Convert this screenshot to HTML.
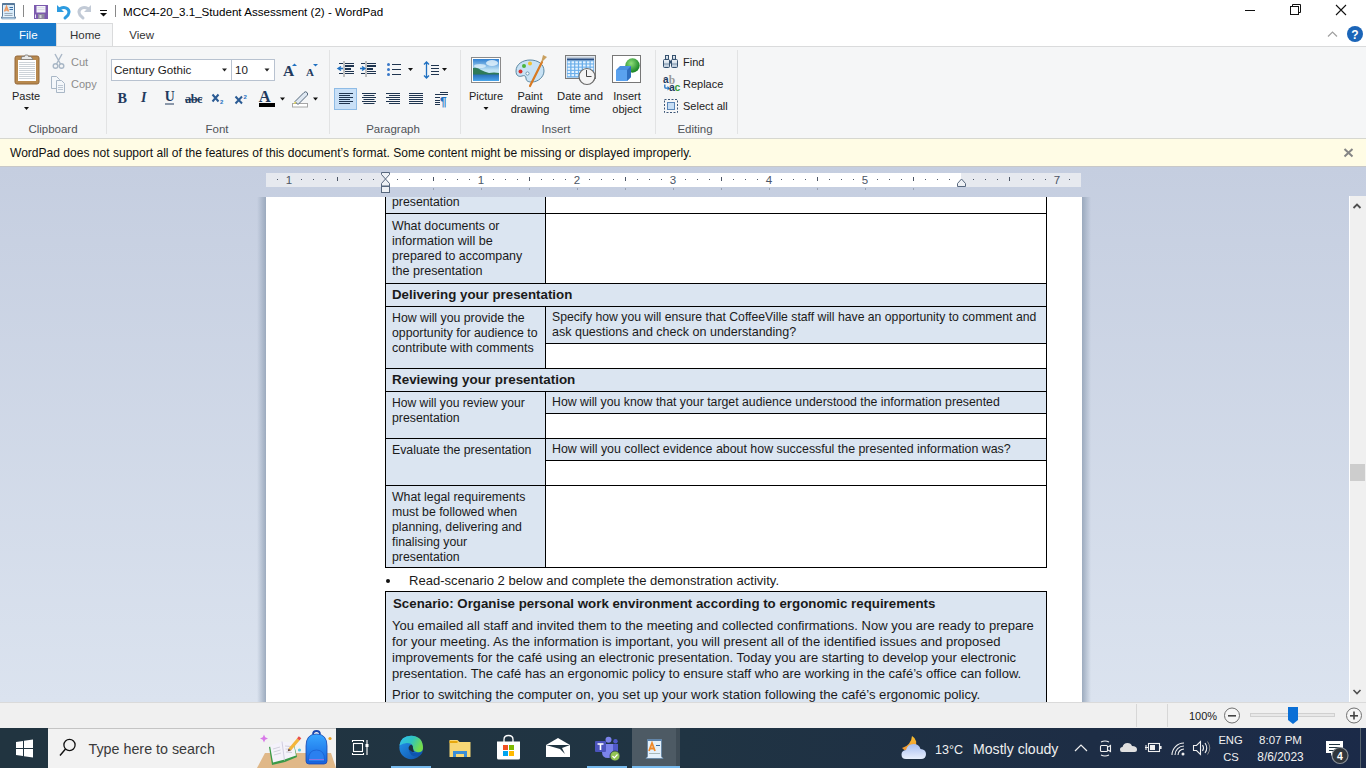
<!DOCTYPE html>
<html><head><meta charset="utf-8">
<style>
*{margin:0;padding:0;box-sizing:border-box}
html,body{width:1366px;height:768px;overflow:hidden;background:#fff;font-family:"Liberation Sans",sans-serif;color:#000}
.a{position:absolute}
.dt{line-height:20px;white-space:nowrap}
#title{left:0;top:0;width:1366px;height:23px;background:#fff}
#tabs{left:0;top:23px;width:1366px;height:23px;background:#fff}
#ribbon{left:0;top:46px;width:1366px;height:93px;background:#f5f6f7;border-top:1px solid #dadbdc;border-bottom:1px solid #d6d7d0}
#notif{left:0;top:139px;width:1366px;height:28px;background:#fffce5;border-bottom:1px solid #c8c8c8}
#work{left:0;top:167px;width:1366px;height:535px;background:linear-gradient(#c5cee0,#dbe3ef)}
#status{left:0;top:702px;width:1366px;height:26px;background:#f0f0f0;border-top:1px solid #dadada}
#taskbar{left:0;top:728px;width:1366px;height:40px;background:linear-gradient(90deg,#213440 0%,#203443 50%,#1d2d45 80%,#1b2a48 100%)}
</style></head><body>
<div id="title" class="a"></div>
<div id="tabs" class="a">
  <div class="a" style="left:56px;top:0;width:57px;height:24px;background:#f5f6f7;border:1px solid #dadbdc;border-bottom:none"></div>
</div>
<div id="ribbon" class="a"></div>
<div id="notif" class="a"></div>
<div id="work" class="a">
  <div class="a" style="left:257px;top:30px;width:9px;height:505px;background:linear-gradient(90deg,rgba(150,165,185,0),rgba(150,165,185,.9))"></div>
  <div class="a" style="left:1082px;top:30px;width:9px;height:505px;background:linear-gradient(90deg,rgba(150,165,185,.9),rgba(150,165,185,0))"></div>
  <div class="a" style="left:266px;top:30px;width:816px;height:505px;background:#fff"></div>
</div>
<div class="a" style="left:0;top:197px;width:1349px;height:505px;overflow:hidden">
<div class="a" style="left:0;top:-197px;width:1349px;height:768px">
<div class="a" style="left:385px;top:197px;width:160px;height:370px;background:#dbe5f1"></div>
<div class="a" style="left:385px;top:283px;width:661px;height:23px;background:#dbe5f1"></div>
<div class="a" style="left:385px;top:368px;width:661px;height:23px;background:#dbe5f1"></div>
<div class="a" style="left:545px;top:306px;width:501px;height:37px;background:#dbe5f1"></div>
<div class="a" style="left:545px;top:391px;width:501px;height:22px;background:#dbe5f1"></div>
<div class="a" style="left:545px;top:438px;width:501px;height:22px;background:#dbe5f1"></div>
<div class="a" style="left:385px;top:213px;width:662px;height:1px;background:#000"></div>
<div class="a" style="left:385px;top:283px;width:662px;height:1px;background:#000"></div>
<div class="a" style="left:385px;top:306px;width:662px;height:1px;background:#000"></div>
<div class="a" style="left:385px;top:368px;width:662px;height:1px;background:#000"></div>
<div class="a" style="left:385px;top:391px;width:662px;height:1px;background:#000"></div>
<div class="a" style="left:385px;top:438px;width:662px;height:1px;background:#000"></div>
<div class="a" style="left:385px;top:485px;width:662px;height:1px;background:#000"></div>
<div class="a" style="left:385px;top:567px;width:662px;height:1px;background:#000"></div>
<div class="a" style="left:545px;top:343px;width:502px;height:1px;background:#000"></div>
<div class="a" style="left:545px;top:413px;width:502px;height:1px;background:#000"></div>
<div class="a" style="left:545px;top:460px;width:502px;height:1px;background:#000"></div>
<div class="a" style="left:385px;top:197px;width:1px;height:371px;background:#000"></div>
<div class="a" style="left:1046px;top:197px;width:1px;height:371px;background:#000"></div>
<div class="a" style="left:545px;top:197px;width:1px;height:86px;background:#000"></div>
<div class="a" style="left:545px;top:306px;width:1px;height:62px;background:#000"></div>
<div class="a" style="left:545px;top:391px;width:1px;height:176px;background:#000"></div>
<div class="a" style="left:385px;top:591px;width:662px;height:111px;background:#dbe5f1"></div>
<div class="a" style="left:385px;top:591px;width:662px;height:1px;background:#000"></div>
<div class="a" style="left:385px;top:591px;width:1px;height:111px;background:#000"></div>
<div class="a" style="left:1046px;top:591px;width:1px;height:111px;background:#000"></div>
<div class="a dt" style="left:392px;top:191.74px;font-size:12.3px;color:#1a1a1a">presentation</div>
<div class="a dt" style="left:392px;top:215.70px;font-size:12.40443396226415px;color:#1a1a1a">What documents or</div>
<div class="a dt" style="left:392px;top:230.64px;font-size:12.581874999999998px;color:#1a1a1a">information will be</div>
<div class="a dt" style="left:392px;top:245.70px;font-size:12.406535433070868px;color:#1a1a1a">prepared to accompany</div>
<div class="a dt" style="left:392px;top:260.63px;font-size:12.614651162790697px;color:#1a1a1a">the presentation</div>
<div class="a dt" style="left:392px;top:285.39px;font-size:13.3px;font-weight:bold;color:#1a1a1a">Delivering your presentation</div>
<div class="a dt" style="left:392px;top:307.74px;font-size:12.3px;color:#1a1a1a">How will you provide the</div>
<div class="a dt" style="left:392px;top:322.74px;font-size:12.3px;color:#1a1a1a">opportunity for audience to</div>
<div class="a dt" style="left:392px;top:337.67px;font-size:12.50649635036496px;color:#1a1a1a">contribute with comments</div>
<div class="a dt" style="left:552px;top:306.76px;font-size:12.22645360824742px;color:#1a1a1a">Specify how you will ensure that CoffeeVille staff will have an opportunity to comment and</div>
<div class="a dt" style="left:552px;top:321.66px;font-size:12.537731092436976px;color:#1a1a1a">ask questions and check on understanding?</div>
<div class="a dt" style="left:392px;top:370.35px;font-size:13.418882681564249px;font-weight:bold;color:#1a1a1a">Reviewing your presentation</div>
<div class="a dt" style="left:392px;top:392.79px;font-size:12.142781954887214px;color:#1a1a1a">How will you review your</div>
<div class="a dt" style="left:392px;top:407.74px;font-size:12.3px;color:#1a1a1a">presentation</div>
<div class="a dt" style="left:552px;top:391.74px;font-size:12.3px;color:#1a1a1a">How will you know that your target audience understood the information presented</div>
<div class="a dt" style="left:392px;top:439.74px;font-size:12.3px;color:#1a1a1a">Evaluate the presentation</div>
<div class="a dt" style="left:552px;top:438.70px;font-size:12.400463576158941px;color:#1a1a1a">How will you collect evidence about how successful the presented information was?</div>
<div class="a dt" style="left:392px;top:486.74px;font-size:12.3px;color:#1a1a1a">What legal requirements</div>
<div class="a dt" style="left:392px;top:501.74px;font-size:12.3px;color:#1a1a1a">must be followed when</div>
<div class="a dt" style="left:392px;top:516.74px;font-size:12.3px;color:#1a1a1a">planning, delivering and</div>
<div class="a dt" style="left:392px;top:531.74px;font-size:12.3px;color:#1a1a1a">finalising your</div>
<div class="a dt" style="left:392px;top:546.74px;font-size:12.3px;color:#1a1a1a">presentation</div>
<div class="a" style="left:386px;top:579px;width:4px;height:4px;border-radius:50%;background:#111"></div>
<div class="a dt" style="left:409px;top:571.07px;font-size:13.07123287671233px;color:#1a1a1a">Read-scenario 2 below and complete the demonstration activity.</div>
<div class="a dt" style="left:393px;top:594.39px;font-size:13.3px;font-weight:bold;color:#1a1a1a">Scenario: Organise personal work environment according to ergonomic requirements</div>
<div class="a dt" style="left:392px;top:616.49px;font-size:13.028482003129891px;color:#1a1a1a">You emailed all staff and invited them to the meeting and collected confirmations. Now you are ready to prepare</div>
<div class="a dt" style="left:392px;top:632.46px;font-size:13.097014925373134px;color:#1a1a1a">for your meeting. As the information is important, you will present all of the identified issues and proposed</div>
<div class="a dt" style="left:392px;top:647.70px;font-size:13px;color:#1a1a1a">improvements for the café using an electronic presentation. Today you are starting to develop your electronic</div>
<div class="a dt" style="left:392px;top:664.48px;font-size:13.03952px;color:#1a1a1a">presentation. The café has an ergonomic policy to ensure staff who are working in the café’s office can follow.</div>
<div class="a dt" style="left:392px;top:684.85px;font-size:13.13px;color:#1a1a1a">Prior to switching the computer on, you set up your work station following the café’s ergonomic policy.</div>
</div></div>
<div id="status" class="a"></div>
<div id="taskbar" class="a"></div>
<div class="a" style="left:0px;top:23px;width:56px;height:23px;background:#1979ca;"></div>
<div class="a" style="left:266px;top:173px;width:815px;height:14px;background:#e6e9ef;"></div>
<div class="a" style="left:385px;top:173px;width:576px;height:14px;background:#ffffff;"></div>
<div class="a" style="left:1349px;top:196px;width:17px;height:506px;background:#f0f0f0;border-left:1px solid #fff"></div>
<div class="a" style="left:1350px;top:464px;width:15px;height:17px;background:#cdcdcd;"></div>
<div class="a" style="left:48px;top:728px;width:288px;height:40px;background:#f2f2f2;border-top:1px solid #c4c4c4"></div>
<div class="a" style="left:391px;top:766px;width:40px;height:2px;background:#76b9ed;"></div>
<div class="a" style="left:587px;top:766px;width:40px;height:2px;background:#76b9ed;"></div>
<div class="a" style="left:632px;top:728px;width:44px;height:40px;background:#4d5a64;"></div>
<div class="a" style="left:676px;top:728px;width:4px;height:40px;background:#3f4c56;"></div>
<div class="a" style="left:632px;top:766px;width:48px;height:2px;background:#76b9ed;"></div><svg class="a" style="left:0;top:0" width="1366" height="768"><g transform="translate(1,3)"><path d="M1.5 0.5 h12 v12.5 l1.2 2 h-14.4 l1.2 -2 z" fill="#eaf4fc" stroke="#56789a" stroke-width="1"/><rect x="1.5" y="0.5" width="12" height="1.6" fill="#56789a"/><rect x="2.5" y="2.5" width="10" height="10" fill="#d8ebfa"/><path d="M3.5 8.5 L5.5 3.5 L7.5 8.5 M4.3 7 h2.4" stroke="#ee9a62" stroke-width="1.5" fill="none"/><rect x="8.5" y="4" width="3.5" height="1" fill="#3a6ea5"/><rect x="8.5" y="6" width="3.5" height="1" fill="#3a6ea5"/><rect x="3.5" y="10" width="8" height="0.8" fill="#8a9aaa"/><rect x="3.5" y="12" width="8" height="0.8" fill="#8a9aaa"/><rect x="1" y="14.5" width="13" height="1.5" fill="#b9d4ec" stroke="#6a8aa8" stroke-width="0.5"/></g>
<rect x="23" y="5" width="1" height="12" fill="#888"/>
<g transform="translate(34,5)"><rect x="0" y="0" width="14" height="14" fill="#7c5aae"/><rect x="2.5" y="1" width="9" height="6.5" fill="#f4f4fa"/><rect x="3.5" y="2.5" width="7" height="0.6" fill="#c8c8d8"/><rect x="3.5" y="4.5" width="7" height="0.6" fill="#c8c8d8"/><rect x="4" y="9" width="6.5" height="5" fill="#8e8a9e"/><rect x="5.5" y="10" width="2" height="3" fill="#d0d0d8"/><rect x="1" y="9.5" width="1" height="3.5" fill="#e8e0f4"/></g>
<path d="M57 5 v7 h7 z" fill="#2d9be0"/><path d="M60 8.5 C66 5.5 71 10 68 15 L65 18" stroke="#2d9be0" stroke-width="3" fill="none" stroke-linecap="round"/>
<path d="M91 5 v7 h-7 z" fill="#c2cad6"/><path d="M88 8.5 C82 5.5 77 10 80 15 L83 18" stroke="#c2cad6" stroke-width="3" fill="none" stroke-linecap="round"/>
<rect x="100" y="10" width="7" height="1" fill="#111"/><path d="M100 13 h7 l-3.5 3.5 z" fill="#111"/>
<rect x="115" y="5" width="1" height="12" fill="#888"/>
<rect x="1245" y="10" width="10" height="1" fill="#111"/>
<rect x="1290.5" y="6.5" width="8" height="8" fill="none" stroke="#111"/><path d="M1292.5 6.5 v-2 h8 v8 h-2" fill="none" stroke="#111"/>
<path d="M1336 5 L1346 15 M1346 5 L1336 15" stroke="#111" stroke-width="1.1"/>
<path d="M1328 36.5 l4.5 -4.5 l4.5 4.5" stroke="#a0a0a0" stroke-width="1.2" fill="none"/>
<circle cx="1355" cy="34" r="8" fill="#1b65b8"/>
<rect x="106" y="50" width="1" height="84" fill="#e2e3e4"/>
<rect x="329" y="50" width="1" height="84" fill="#e2e3e4"/>
<rect x="460" y="50" width="1" height="84" fill="#e2e3e4"/>
<rect x="655" y="50" width="1" height="84" fill="#e2e3e4"/>
<rect x="737" y="50" width="1" height="84" fill="#e2e3e4"/>
<g><rect x="15" y="56" width="24" height="28" rx="2" fill="#b8894e" stroke="#94683a" stroke-width="1"/><rect x="18" y="60" width="18" height="21" fill="#fff"/><rect x="19" y="62" width="16" height="0.7" fill="#b8c0c8"/><rect x="19" y="64" width="16" height="0.7" fill="#b8c0c8"/><rect x="19" y="66" width="16" height="0.7" fill="#b8c0c8"/><rect x="19" y="68" width="16" height="0.7" fill="#b8c0c8"/><rect x="19" y="70" width="16" height="0.7" fill="#b8c0c8"/><rect x="19" y="72" width="16" height="0.7" fill="#b8c0c8"/><rect x="19" y="74" width="16" height="0.7" fill="#b8c0c8"/><rect x="19" y="76" width="16" height="0.7" fill="#b8c0c8"/><rect x="19" y="78" width="16" height="0.7" fill="#b8c0c8"/><path d="M21 59.5 h12 l-2 -3 h-2.5 l-0.7 -1.5 h-2.6 l-0.7 1.5 h-2.5 z" fill="#e8e8e8" stroke="#777" stroke-width="0.8"/></g>
<path d="M24.0 107 h5 l-2.5 3.0 z" fill="#111"/>
<g stroke="#a9b7c6" fill="none" stroke-width="1.4"><path d="M55 54 L60.5 64 M62 54 L56.5 64"/><circle cx="55.5" cy="66" r="2.3"/><circle cx="61.5" cy="66" r="2.3"/></g>
<g stroke="#a9b7c6" fill="#f4f7fa" stroke-width="1"><path d="M51.5 76.5 h5 l3 3 v9 h-8 z"/><path d="M56.5 80.5 h5 l3 3 v9 h-8 z"/></g><g fill="#b0bccb"><rect x="58" y="85" width="5" height="0.8"/><rect x="58" y="87" width="5" height="0.8"/><rect x="58" y="89" width="5" height="0.8"/></g>
<rect x="111.5" y="59.5" width="120" height="21" fill="#fff" stroke="#b8c2d0"/>
<rect x="231.5" y="59.5" width="43" height="21" fill="#fff" stroke="#b8c2d0"/>
<path d="M222.0 68.5 h5 l-2.5 3.0 z" fill="#222"/>
<path d="M264.5 68.5 h5 l-2.5 3.0 z" fill="#222"/>
<path d="M292 66 l2.5 -2.5 l2.5 2.5 z" fill="#1f70c1"/>
<path d="M313 64 h5 l-2.5 2.5 z" fill="#1f70c1"/>
<rect x="165" y="103.5" width="9" height="1" fill="#223a5e"/>
<rect x="185" y="99.2" width="17" height="1.1" fill="#223a5e"/>
<path d="M212.5 94.5 l6 7 M218.5 94.5 l-6 7" stroke="#2b5b94" stroke-width="2"/>
<path d="M235.5 96.5 l6.5 7 M242 96.5 l-6.5 7" stroke="#2b5b94" stroke-width="2"/>
<rect x="259" y="103" width="16" height="4" fill="#000"/>
<path d="M280.0 97.5 h5 l-2.5 3.0 z" fill="#111"/>
<g><rect x="292.5" y="103.5" width="15" height="3.5" fill="#fff" stroke="#a6a6a6"/><path d="M295 101.5 l9 -9 a2 2 0 0 1 3 3 l-9 9 z" fill="#dfe8f2" stroke="#56687c" stroke-width="1"/><path d="M295 101.5 l-1.5 2.5 l3 -1 z" fill="#e8d84a"/></g>
<path d="M313.0 97.5 h5 l-2.5 3.0 z" fill="#111"/>
<g fill="#1f3550"><rect x="339" y="63" width="4" height="1"/><rect x="345" y="63" width="9" height="1"/><rect x="345" y="65" width="9" height="2"/><rect x="345" y="68" width="6" height="2"/><rect x="345" y="71" width="9" height="1"/><rect x="339" y="73" width="4" height="1"/><rect x="345" y="73" width="9" height="1"/><path d="M344 61.5 v16" stroke="#222" stroke-width="1" stroke-dasharray="1,1"/></g>
<path d="M343 68.5 h-4 M341 66.5 l-3 2 l3 2" stroke="#1f70c1" stroke-width="1.4" fill="none"/>
<g fill="#1f3550"><rect x="361" y="63" width="4" height="1"/><rect x="367" y="63" width="9" height="1"/><rect x="367" y="65" width="9" height="2"/><rect x="367" y="68" width="6" height="2"/><rect x="367" y="71" width="9" height="1"/><rect x="361" y="73" width="4" height="1"/><rect x="367" y="73" width="9" height="1"/><path d="M366 61.5 v16" stroke="#222" stroke-width="1" stroke-dasharray="1,1"/></g>
<path d="M360 68.5 h4 M362 66.5 l3 2 l-3 2" stroke="#1f70c1" stroke-width="1.4" fill="none"/>
<circle cx="388.5" cy="64.5" r="1.5" fill="#3a78c8"/>
<rect x="392" y="64" width="9" height="1" fill="#1f3550"/>
<circle cx="388.5" cy="69.5" r="1.5" fill="#3a78c8"/>
<rect x="392" y="69" width="9" height="1" fill="#1f3550"/>
<circle cx="388.5" cy="74.5" r="1.5" fill="#3a78c8"/>
<rect x="392" y="74" width="9" height="1" fill="#1f3550"/>
<path d="M408.0 68 h5 l-2.5 3.0 z" fill="#111"/>
<path d="M426.5 62 v16 M424 64.5 l2.5 -2.5 l2.5 2.5 M424 75.5 l2.5 2.5 l2.5 -2.5" stroke="#1f70c1" stroke-width="1.3" fill="none"/>
<rect x="431" y="65" width="8" height="1" fill="#1f3550"/>
<rect x="431" y="68" width="8" height="1" fill="#1f3550"/>
<rect x="431" y="71" width="8" height="1" fill="#1f3550"/>
<rect x="431" y="74" width="8" height="1" fill="#1f3550"/>
<path d="M442.0 68 h5 l-2.5 3.0 z" fill="#111"/>
<rect x="334.5" y="88.5" width="22" height="21" fill="#c9e0f7" stroke="#8fbce6"/>
<rect x="339" y="93" width="14" height="1" fill="#1f3550"/>
<rect x="339" y="95" width="11" height="1" fill="#1f3550"/>
<rect x="339" y="97" width="14" height="1" fill="#1f3550"/>
<rect x="339" y="99" width="11" height="1" fill="#1f3550"/>
<rect x="339" y="101" width="14" height="1" fill="#1f3550"/>
<rect x="339" y="103" width="11" height="1" fill="#1f3550"/>
<rect x="362.0" y="93" width="14.0" height="1" fill="#1f3550"/>
<rect x="363.5" y="95" width="11.0" height="1" fill="#1f3550"/>
<rect x="362.0" y="97" width="14.0" height="1" fill="#1f3550"/>
<rect x="363.5" y="99" width="11.0" height="1" fill="#1f3550"/>
<rect x="362.0" y="101" width="14.0" height="1" fill="#1f3550"/>
<rect x="363.5" y="103" width="11.0" height="1" fill="#1f3550"/>
<rect x="386" y="93" width="14" height="1" fill="#1f3550"/>
<rect x="389" y="95" width="11" height="1" fill="#1f3550"/>
<rect x="386" y="97" width="14" height="1" fill="#1f3550"/>
<rect x="389" y="99" width="11" height="1" fill="#1f3550"/>
<rect x="386" y="101" width="14" height="1" fill="#1f3550"/>
<rect x="389" y="103" width="11" height="1" fill="#1f3550"/>
<rect x="409" y="93" width="14" height="1" fill="#1f3550"/>
<rect x="409" y="95" width="14" height="1" fill="#1f3550"/>
<rect x="409" y="97" width="14" height="1" fill="#1f3550"/>
<rect x="409" y="99" width="14" height="1" fill="#1f3550"/>
<rect x="409" y="101" width="14" height="1" fill="#1f3550"/>
<rect x="409" y="103" width="14" height="1" fill="#1f3550"/>
<rect x="440" y="92" width="8" height="1" fill="#1f3550"/>
<rect x="435" y="94" width="13" height="1" fill="#1f3550"/>
<rect x="435" y="97" width="5" height="1" fill="#1f3550"/>
<rect x="435" y="100" width="5" height="1" fill="#1f3550"/>
<rect x="435" y="102" width="5" height="1" fill="#1f3550"/>
<rect x="435" y="104" width="5" height="1" fill="#1f3550"/>
<defs><linearGradient id="sky" x1="0" y1="0" x2="0" y2="1"><stop offset="0" stop-color="#3f8fd8"/><stop offset="0.45" stop-color="#d6eef8"/><stop offset="0.6" stop-color="#4d9a7a"/><stop offset="0.75" stop-color="#2f6e68"/><stop offset="0.8" stop-color="#3b8cd0"/><stop offset="1" stop-color="#5aaee8"/></linearGradient><radialGradient id="ball" cx="0.4" cy="0.35" r="0.6"><stop offset="0" stop-color="#8fde7a"/><stop offset="1" stop-color="#1f8a2a"/></radialGradient><linearGradient id="sky2" x1="0" y1="0" x2="0" y2="1"><stop offset="0" stop-color="#2f80d2"/><stop offset="0.5" stop-color="#bfe2f4"/><stop offset="1" stop-color="#d8eef8"/></linearGradient><linearGradient id="water" x1="0" y1="0" x2="0" y2="1"><stop offset="0" stop-color="#2a6fb8"/><stop offset="1" stop-color="#4aa6ea"/></linearGradient></defs>
<rect x="471.5" y="57.5" width="29" height="25" fill="#fff" stroke="#8a8a8a"/>
<rect x="473" y="59" width="26" height="22" fill="url(#sky2)"/>
<ellipse cx="492" cy="63" rx="6" ry="3" fill="#e8f6fc" opacity="0.8"/><ellipse cx="480" cy="66" rx="6" ry="2" fill="#e8f6fc" opacity="0.7"/>
<path d="M473 68 q4 -1 8 2 q4 2 8 3 q5 -1 10 0 v3 h-26 z" fill="#2f7a58"/>
<rect x="473" y="74.5" width="26" height="6.5" fill="url(#water)"/>
<path d="M483.5 107 h5 l-2.5 3.0 z" fill="#111"/>
<path d="M516 71 c0 -7 7 -11 14 -11 c8 0 14 4 14 11 c0 6 -6 11 -12 11 c-4 0 -6 -1 -6 -4 c0 -2 -2 -3 -4 -2 c-3 1 -6 0 -6 -5 z" fill="#c8e2f5" stroke="#4b7a96" stroke-width="0.9"/>
<circle cx="520.5" cy="71.5" r="2" fill="#d9302a"/><circle cx="524" cy="66" r="2" fill="#4cb53a"/><circle cx="530" cy="63.5" r="2" fill="#f2c12e"/><circle cx="527.5" cy="73.5" r="1.6" fill="#fff" stroke="#4b7a96" stroke-width="0.7"/>
<path d="M530 86 L542 62" stroke="#d87a22" stroke-width="2.2" stroke-linecap="round"/><path d="M541 63 l2 -8 l4 2 z" fill="#c9a060"/>
<rect x="565.5" y="55.5" width="30" height="23" fill="#dfe6ee" stroke="#7a7a7a"/>
<rect x="567" y="57" width="27" height="1.5" fill="#c0cad6"/><rect x="567" y="58.5" width="27" height="2" fill="#2b4f84"/>
<rect x="567" y="60.5" width="27" height="17" fill="#6aaeea"/>
<rect x="567.6" y="61.3" width="2.6" height="2.1" fill="#e6f4ff"/>
<rect x="571.5" y="61.3" width="2.6" height="2.1" fill="#e6f4ff"/>
<rect x="575.3" y="61.3" width="2.6" height="2.1" fill="#e6f4ff"/>
<rect x="579.1" y="61.3" width="2.6" height="2.1" fill="#e6f4ff"/>
<rect x="583.0" y="61.3" width="2.6" height="2.1" fill="#e6f4ff"/>
<rect x="586.9" y="61.3" width="2.6" height="2.1" fill="#e6f4ff"/>
<rect x="590.7" y="61.3" width="2.6" height="2.1" fill="#e6f4ff"/>
<rect x="567.6" y="64.5" width="2.6" height="2.1" fill="#e6f4ff"/>
<rect x="571.5" y="64.5" width="2.6" height="2.1" fill="#e6f4ff"/>
<rect x="575.3" y="64.5" width="2.6" height="2.1" fill="#e6f4ff"/>
<rect x="579.1" y="64.5" width="2.6" height="2.1" fill="#e6f4ff"/>
<rect x="583.0" y="64.5" width="2.6" height="2.1" fill="#e6f4ff"/>
<rect x="586.9" y="64.5" width="2.6" height="2.1" fill="#e6f4ff"/>
<rect x="590.7" y="64.5" width="2.6" height="2.1" fill="#e6f4ff"/>
<rect x="567.6" y="67.7" width="2.6" height="2.1" fill="#e6f4ff"/>
<rect x="571.5" y="67.7" width="2.6" height="2.1" fill="#e6f4ff"/>
<rect x="575.3" y="67.7" width="2.6" height="2.1" fill="#e6f4ff"/>
<rect x="579.1" y="67.7" width="2.6" height="2.1" fill="#e6f4ff"/>
<rect x="583.0" y="67.7" width="2.6" height="2.1" fill="#e6f4ff"/>
<rect x="586.9" y="67.7" width="2.6" height="2.1" fill="#e6f4ff"/>
<rect x="590.7" y="67.7" width="2.6" height="2.1" fill="#e6f4ff"/>
<rect x="567.6" y="70.9" width="2.6" height="2.1" fill="#e6f4ff"/>
<rect x="571.5" y="70.9" width="2.6" height="2.1" fill="#e6f4ff"/>
<rect x="575.3" y="70.9" width="2.6" height="2.1" fill="#e6f4ff"/>
<rect x="579.1" y="70.9" width="2.6" height="2.1" fill="#e6f4ff"/>
<rect x="583.0" y="70.9" width="2.6" height="2.1" fill="#e6f4ff"/>
<rect x="586.9" y="70.9" width="2.6" height="2.1" fill="#e6f4ff"/>
<rect x="590.7" y="70.9" width="2.6" height="2.1" fill="#e6f4ff"/>
<rect x="567.6" y="74.1" width="2.6" height="2.1" fill="#e6f4ff"/>
<rect x="571.5" y="74.1" width="2.6" height="2.1" fill="#e6f4ff"/>
<rect x="575.3" y="74.1" width="2.6" height="2.1" fill="#e6f4ff"/>
<rect x="579.1" y="74.1" width="2.6" height="2.1" fill="#e6f4ff"/>
<rect x="583.0" y="74.1" width="2.6" height="2.1" fill="#e6f4ff"/>
<rect x="586.9" y="74.1" width="2.6" height="2.1" fill="#e6f4ff"/>
<rect x="590.7" y="74.1" width="2.6" height="2.1" fill="#e6f4ff"/>
<circle cx="587" cy="76.5" r="8" fill="#f4f4f4" stroke="#6a6a6a" stroke-width="1.2"/><path d="M586.5 70 v6.5 h5" stroke="#333" stroke-width="0.9" fill="none"/>
<rect x="612.5" y="55.5" width="28" height="27" fill="#fff" stroke="#777"/>
<circle cx="632.5" cy="65.5" r="7.2" fill="url(#ball)"/>
<path d="M616 70 l4 -4 h11 v11 l-4 4 h-11 z" fill="#4a90e0"/><path d="M616 70 h11 v11 h-11 z" fill="#5aa2ef"/><path d="M627 70 l4 -4 v11 l-4 4 z" fill="#2f6fbf"/>
<defs><linearGradient id="bino" x1="0" y1="0" x2="0" y2="1"><stop offset="0" stop-color="#f0f4f8"/><stop offset="1" stop-color="#b8c8d8"/></linearGradient></defs>
<g fill="url(#bino)" stroke="#34506e" stroke-width="1"><rect x="665.5" y="55.5" width="3" height="4"/><rect x="672.5" y="55.5" width="3" height="4"/><rect x="663.5" y="59.5" width="6" height="8" rx="1"/><rect x="671.5" y="59.5" width="6" height="8" rx="1"/></g><rect x="669" y="60.5" width="3" height="3" fill="#34506e"/><rect x="664" y="63.5" width="5" height="1" fill="#7890a8"/><rect x="672" y="63.5" width="5" height="1" fill="#7890a8"/>
<path d="M664.8 84.5 v2.5 q0 1.2 1.2 1.2 h1.8" stroke="#1f70c1" stroke-width="1.3" fill="none"/><path d="M667.5 86 l2.5 2.2 l-2.5 2.2 z" fill="#1f70c1"/>
<rect x="664.5" y="99.5" width="13" height="13" fill="none" stroke="#3c5676" stroke-dasharray="2,1.5"/><rect x="667.5" y="102.5" width="7" height="7" fill="#c6def5" stroke="#5a86b8"/>
<path d="M1344.5 149 l8 7.5 M1352.5 149 l-8 7.5" stroke="#858585" stroke-width="2"/>
<rect x="277" y="179" width="1" height="1" fill="#4b5566"/>
<rect x="301" y="179" width="1" height="1" fill="#4b5566"/>
<rect x="313" y="179" width="1" height="1" fill="#4b5566"/>
<rect x="325" y="179" width="1" height="1" fill="#4b5566"/>
<rect x="337" y="177" width="1" height="4" fill="#4b5566"/>
<rect x="349" y="179" width="1" height="1" fill="#4b5566"/>
<rect x="361" y="179" width="1" height="1" fill="#4b5566"/>
<rect x="373" y="179" width="1" height="1" fill="#4b5566"/>
<rect x="397" y="179" width="1" height="1" fill="#4b5566"/>
<rect x="409" y="179" width="1" height="1" fill="#4b5566"/>
<rect x="421" y="179" width="1" height="1" fill="#4b5566"/>
<rect x="433" y="177" width="1" height="4" fill="#4b5566"/>
<rect x="445" y="179" width="1" height="1" fill="#4b5566"/>
<rect x="457" y="179" width="1" height="1" fill="#4b5566"/>
<rect x="469" y="179" width="1" height="1" fill="#4b5566"/>
<rect x="493" y="179" width="1" height="1" fill="#4b5566"/>
<rect x="505" y="179" width="1" height="1" fill="#4b5566"/>
<rect x="517" y="179" width="1" height="1" fill="#4b5566"/>
<rect x="529" y="177" width="1" height="4" fill="#4b5566"/>
<rect x="541" y="179" width="1" height="1" fill="#4b5566"/>
<rect x="553" y="179" width="1" height="1" fill="#4b5566"/>
<rect x="565" y="179" width="1" height="1" fill="#4b5566"/>
<rect x="589" y="179" width="1" height="1" fill="#4b5566"/>
<rect x="601" y="179" width="1" height="1" fill="#4b5566"/>
<rect x="613" y="179" width="1" height="1" fill="#4b5566"/>
<rect x="625" y="177" width="1" height="4" fill="#4b5566"/>
<rect x="637" y="179" width="1" height="1" fill="#4b5566"/>
<rect x="649" y="179" width="1" height="1" fill="#4b5566"/>
<rect x="661" y="179" width="1" height="1" fill="#4b5566"/>
<rect x="685" y="179" width="1" height="1" fill="#4b5566"/>
<rect x="697" y="179" width="1" height="1" fill="#4b5566"/>
<rect x="709" y="179" width="1" height="1" fill="#4b5566"/>
<rect x="721" y="177" width="1" height="4" fill="#4b5566"/>
<rect x="733" y="179" width="1" height="1" fill="#4b5566"/>
<rect x="745" y="179" width="1" height="1" fill="#4b5566"/>
<rect x="757" y="179" width="1" height="1" fill="#4b5566"/>
<rect x="781" y="179" width="1" height="1" fill="#4b5566"/>
<rect x="793" y="179" width="1" height="1" fill="#4b5566"/>
<rect x="805" y="179" width="1" height="1" fill="#4b5566"/>
<rect x="817" y="177" width="1" height="4" fill="#4b5566"/>
<rect x="829" y="179" width="1" height="1" fill="#4b5566"/>
<rect x="841" y="179" width="1" height="1" fill="#4b5566"/>
<rect x="853" y="179" width="1" height="1" fill="#4b5566"/>
<rect x="877" y="179" width="1" height="1" fill="#4b5566"/>
<rect x="889" y="179" width="1" height="1" fill="#4b5566"/>
<rect x="901" y="179" width="1" height="1" fill="#4b5566"/>
<rect x="913" y="177" width="1" height="4" fill="#4b5566"/>
<rect x="925" y="179" width="1" height="1" fill="#4b5566"/>
<rect x="937" y="179" width="1" height="1" fill="#4b5566"/>
<rect x="949" y="179" width="1" height="1" fill="#4b5566"/>
<rect x="973" y="179" width="1" height="1" fill="#4b5566"/>
<rect x="985" y="179" width="1" height="1" fill="#4b5566"/>
<rect x="997" y="179" width="1" height="1" fill="#4b5566"/>
<rect x="1009" y="177" width="1" height="4" fill="#4b5566"/>
<rect x="1021" y="179" width="1" height="1" fill="#4b5566"/>
<rect x="1033" y="179" width="1" height="1" fill="#4b5566"/>
<rect x="1045" y="179" width="1" height="1" fill="#4b5566"/>
<rect x="1069" y="179" width="1" height="1" fill="#4b5566"/>
<rect x="433" y="188" width="1" height="2" fill="#9aa4b4"/>
<rect x="481" y="188" width="1" height="2" fill="#9aa4b4"/>
<rect x="529" y="188" width="1" height="2" fill="#9aa4b4"/>
<rect x="577" y="188" width="1" height="2" fill="#9aa4b4"/>
<rect x="625" y="188" width="1" height="2" fill="#9aa4b4"/>
<rect x="673" y="188" width="1" height="2" fill="#9aa4b4"/>
<rect x="721" y="188" width="1" height="2" fill="#9aa4b4"/>
<rect x="769" y="188" width="1" height="2" fill="#9aa4b4"/>
<rect x="817" y="188" width="1" height="2" fill="#9aa4b4"/>
<rect x="865" y="188" width="1" height="2" fill="#9aa4b4"/>
<rect x="913" y="188" width="1" height="2" fill="#9aa4b4"/>
<path d="M381.5 172.5 h8 v2 l-4 4.5 l-4 -4.5 z" fill="#eef1f5" stroke="#58687e"/><path d="M385.5 179 l4 4.5 v2.5 h-8 v-2.5 z" fill="#eef1f5" stroke="#58687e"/><rect x="381.5" y="186.5" width="8" height="6" fill="#eef1f5" stroke="#58687e"/>
<path d="M961.5 179 l4 4.5 v3 h-8 v-3 z" fill="#eef1f5" stroke="#58687e"/>
<path d="M1353.5 208 l3.5 -3.5 l3.5 3.5" stroke="#505050" stroke-width="1.8" fill="none"/>
<path d="M1353.5 690 l3.5 3.5 l3.5 -3.5" stroke="#505050" stroke-width="1.6" fill="none"/>
<rect x="1136" y="704" width="1" height="23" fill="#d7d7d7"/><rect x="1167" y="704" width="1" height="23" fill="#d7d7d7"/>
<circle cx="1232" cy="715.5" r="7.5" fill="#f5f5f5" stroke="#707070"/><rect x="1228" y="715" width="8" height="1.6" fill="#444"/>
<rect x="1250.5" y="713.5" width="84" height="3" fill="#e8e8e8" stroke="#d0d0d0"/>
<path d="M1288 707 h10 v13 l-5 4 l-5 -4 z" fill="#0a6fd6"/>
<circle cx="1354" cy="715.5" r="7.5" fill="#f5f5f5" stroke="#707070"/><rect x="1350" y="715" width="8" height="1.6" fill="#444"/><rect x="1353.2" y="711.5" width="1.6" height="8" fill="#444"/>
<g fill="#fff"><path d="M16 742 l7 -1 v7 h-7 z"/><path d="M24 740.8 l9 -1.3 v8.5 h-9 z"/><path d="M16 749 h7 v7 l-7 -1 z"/><path d="M24 749 h9 v8.5 l-9 -1.3 z"/></g>
<circle cx="69.5" cy="745" r="5.6" fill="none" stroke="#111" stroke-width="1.3"/><path d="M65.5 749 l-5.5 6.5" stroke="#111" stroke-width="1.4"/>
<path d="M257 768 l8 -15 h66 l5 15 z" fill="#e0b888"/>
<defs><linearGradient id="bp" x1="0" y1="0" x2="0" y2="1"><stop offset="0" stop-color="#38a6ff"/><stop offset="1" stop-color="#1462e0"/></linearGradient></defs>
<path d="M269 747 l13 -4 l12 1 l3 13 l-12 5 l-13 3 z" fill="#3a9a48"/>
<path d="M270 745.5 l12 -4 l11.5 1.5 l2.5 12.5 l-11.5 4 l-11.5 3 z" fill="#f4f2fa"/>
<path d="M282 741.5 l2.5 19" stroke="#c8c4d8" stroke-width="0.8"/>
<g stroke="#b8b8c8" stroke-width="0.6"><path d="M273 749 l7 -2 M273.5 752 l7 -2 M274 755 l7 -2 M285 746 l6 0.5 M285.5 749 l6 0.5 M286 752 l6 0.5"/></g>
<path d="M288.5 748.5 l8.5 -10 l2.5 2 l-8.5 10 z" fill="#f4b53a"/><path d="M297 738.5 l1.8 -2.2 l2.5 2 l-1.8 2.2 z" fill="#e8504a"/><path d="M288.5 748.5 l-0.8 2.8 l3.3 -0.8 z" fill="#6a4a3a"/>
<path d="M313 734.5 q0 -3.5 3.5 -3.5 q3.5 0 3.5 3.5" stroke="#1a48b0" stroke-width="1.8" fill="none"/>
<path d="M306 746 q0 -12 10.5 -12 q10.5 0 10.5 12 v15 q0 3 -3 3 h-15 q-3 0 -3 -3 z" fill="url(#bp)" stroke="#1a48b0" stroke-width="0.8"/>
<path d="M308.5 760 q0 -10 8 -10 q8 0 8 10 v1.5 h-16 z" fill="#2a80f0" stroke="#1a58c8" stroke-width="0.6"/>
<path d="M309 759.5 h15" stroke="#b070e0" stroke-width="1" opacity="0.7"/>
<path d="M264 734.5 l1.2 2.8 l2.8 1.2 l-2.8 1.2 l-1.2 2.8 l-1.2 -2.8 l-2.8 -1.2 l2.8 -1.2 z" fill="#d878e8"/><circle cx="330" cy="738.5" r="1.6" fill="#e8a020"/><circle cx="299.5" cy="750" r="1.6" fill="#5ac8e0"/>
<g stroke="#fff" stroke-width="1.1" fill="none"><path d="M353 740.5 h10 M353 754.5 h10 M352.5 740 v2 M363.5 740 v2 M352.5 753 v2 M363.5 753 v2"/><rect x="353.5" y="743.5" width="9" height="8"/><path d="M367 740 v15"/></g><rect x="365.5" y="744" width="3" height="3" fill="#fff"/>
<defs><linearGradient id="edg" x1="0" y1="0" x2="1" y2="0.4"><stop offset="0" stop-color="#33bff2"/><stop offset="0.55" stop-color="#2fc4c0"/><stop offset="1" stop-color="#74dc4c"/></linearGradient><linearGradient id="edg2" x1="0" y1="0" x2="1" y2="1"><stop offset="0" stop-color="#2598f0"/><stop offset="1" stop-color="#0e4ea6"/></linearGradient></defs>
<circle cx="411.2" cy="747.5" r="11.8" fill="url(#edg2)"/>
<path d="M399.3 745.5 Q400.5 736 411.2 735.7 Q423 736 423 748.4 Q422.5 752.5 417.9 752.2 Q413.5 751.8 413 748 Q412.5 744 410.8 743.7 Q405.5 741.5 399.3 745.5 Z" fill="url(#edg)"/>
<path d="M408.6 747.5 Q409.5 744.5 411.5 744.8 Q413.2 745.5 413 748.5 Q413.3 751 414.5 751.8 Q410 752.5 408.8 749.5 Z" fill="#1d2f3c"/>
<path d="M408.8 749.5 Q409.5 756 416.5 756.5 Q421.5 756 423 751 Q421 753.5 416.5 753.2 Q411.5 752.8 410.5 750.5 Z" fill="#0f54ae"/>
<path d="M449.5 740 h8 l2 2 h11 v15 h-21 z" fill="#f8d775"/><rect x="449.5" y="741" width="8" height="2" fill="#e8a80c"/><path d="M453 757 v-6 h14 v6 h-3 v-3 h-8 v3 z" fill="#3b8ed8"/>
<path d="M504 742 v-2.5 q0 -4 4.5 -4 q4.5 0 4.5 4 v2.5" stroke="#fff" stroke-width="1.3" fill="none"/><path d="M497 741.5 h23 v16.5 q0 1.5 -1.5 1.5 h-20 q-1.5 0 -1.5 -1.5 z" fill="#fff"/><rect x="503" y="745" width="5" height="5" fill="#f25022"/><rect x="509" y="745" width="5" height="5" fill="#7fba00"/><rect x="503" y="751" width="5" height="5" fill="#00a4ef"/><rect x="509" y="751" width="5" height="5" fill="#ffb900"/>
<path d="M546 745 l12 -7 l12 7 v12 h-24 z" fill="#fff"/><path d="M546 745 l24 0 l-8 3 l3 6 l-5 -5 z" fill="#203441"/>
<circle cx="608.5" cy="739.8" r="3" fill="#7b83eb"/><circle cx="615.5" cy="741.3" r="2.2" fill="#5059c9"/><path d="M602 744 h11 v9 q0 5 -5 5 q-6 0 -6 -6 z" fill="#7b83eb"/><path d="M613 744 h5 v7 q0 3 -3 3 h-2 z" fill="#5059c9"/><rect x="595" y="741" width="11" height="11" rx="1" fill="#4b53bc"/><path d="M597.5 744 h6 M600.5 744 v6" stroke="#fff" stroke-width="1.6"/><circle cx="615" cy="756" r="5" fill="#92c353" stroke="#203441" stroke-width="0.8"/><path d="M612.5 756 l1.8 1.8 l3.2 -3.3" stroke="#fff" stroke-width="1.2" fill="none"/>
<g transform="translate(646,739)"><path d="M1.5 0.5 h14 v17 l1.5 2 h-17 l1.5 -2 z" fill="#e4f0fb" stroke="#6c8aa6" stroke-width="1"/><rect x="1.5" y="0.5" width="14" height="1.5" fill="#5b82ad"/><path d="M3 12 L6 4 L9 12 M4.2 9.5 h3.6" stroke="#ef8a2c" stroke-width="1.8" fill="none"/><rect x="10" y="6" width="4" height="1" fill="#3a6ea5"/><rect x="3" y="14" width="11" height="0.8" fill="#9aa"/></g>
<defs><linearGradient id="cld" x1="0" y1="0" x2="0" y2="1"><stop offset="0" stop-color="#a6bdf0"/><stop offset="1" stop-color="#e8f0fd"/></linearGradient><linearGradient id="moon" x1="0" y1="0" x2="0" y2="1"><stop offset="0" stop-color="#f8c030"/><stop offset="1" stop-color="#f09030"/></linearGradient></defs>
<path d="M912 736 A8 8 0 1 1 902 748 A13 13 0 0 0 912 736 Z" fill="url(#moon)"/>
<path d="M906 759 q-4.5 0 -4.5 -4.5 q0 -4 4.5 -4.5 q1.5 -6 7.5 -6 q5.5 0 7 5 q5.5 0.5 5.5 5 q0 5 -5 5 z" fill="url(#cld)"/>
<path d="M1075 751 l6 -6 l6 6" stroke="#f0f0f0" stroke-width="1.2" fill="none"/>
<g stroke="#f0f0f0" stroke-width="1.1" fill="none"><rect x="1100.5" y="745.5" width="7" height="6" rx="1"/><path d="M1108 747 l2.5 -1.5 v6 l-2.5 -1.5"/><path d="M1101 742 q4 -2 8 0 M1101 755 q4 2 8 0"/></g>
<path d="M1122 752 q-2 0 -2 -2.5 q0 -2.5 2.5 -2.5 q1 -4 5 -4 q3.5 0 4.5 3 q5 0 5 3.5 q0 2.5 -2.5 2.5 z" fill="#e0e0e0"/>
<g stroke="#f0f0f0" stroke-width="1.1" fill="none"><rect x="1148.5" y="743.5" width="11" height="8"/><path d="M1145 747.5 h3 M1146 745 v5"/></g><rect x="1160" y="746" width="1.6" height="3" fill="#f0f0f0"/><rect x="1150" y="745" width="5" height="5" fill="#f0f0f0"/>
<g stroke="#f0f0f0" stroke-width="1.1" fill="none"><path d="M1172 755 a12 12 0 0 1 12 -12"/><path d="M1175 755 a9 9 0 0 1 9 -9"/><path d="M1178 755 a6 6 0 0 1 6 -6"/></g><circle cx="1183" cy="754" r="1.5" fill="#f0f0f0"/>
<g stroke="#f0f0f0" stroke-width="1.1" fill="none"><path d="M1193.5 745.5 h3 l4 -4 v13 l-4 -4 h-3 z"/><path d="M1202.5 745 q2 3 0 6"/><path d="M1205 743 q3.5 5 0 10"/></g><path d="M1207.5 741.5 q4.5 6.5 0 13" stroke="#888" stroke-width="1" fill="none"/>
<path d="M1326 741 h17 v12 h-9 l-3 3 v-3 h-5 z" fill="#fff"/><g fill="#203441"><rect x="1329" y="744" width="11" height="1"/><rect x="1329" y="747" width="11" height="1"/><rect x="1329" y="750" width="7" height="1"/></g>
<circle cx="1340" cy="755.5" r="8" fill="#30363c" stroke="#8a9096" stroke-width="1.2"/>
<rect x="1360" y="728" width="1" height="40" fill="#56636e"/></svg>
<div class="a dt" style="left:123px;top:1.98px;font-size:11.6px;color:#000;">MCC4-20_3.1_Student Assessment (2) - WordPad</div>
<div class="a dt" style="left:19px;top:25.02px;font-size:11.5px;color:#fff;">File</div>
<div class="a dt" style="left:70px;top:25.02px;font-size:11.5px;color:#333;">Home</div>
<div class="a dt" style="left:129.3px;top:25.02px;font-size:11.5px;color:#333;">View</div>
<div class="a dt" style="left:1255px;width:200px;text-align:center;top:24.84px;font-size:12px;font-weight:bold;color:#fff;">?</div>
<div class="a dt" style="left:-47px;width:200px;text-align:center;top:119.02px;font-size:11.5px;color:#505358;">Clipboard</div>
<div class="a dt" style="left:117px;width:200px;text-align:center;top:119.02px;font-size:11.5px;color:#505358;">Font</div>
<div class="a dt" style="left:293px;width:200px;text-align:center;top:119.02px;font-size:11.5px;color:#505358;">Paragraph</div>
<div class="a dt" style="left:456px;width:200px;text-align:center;top:119.02px;font-size:11.5px;color:#505358;">Insert</div>
<div class="a dt" style="left:595px;width:200px;text-align:center;top:119.02px;font-size:11.5px;color:#505358;">Editing</div>
<div class="a dt" style="left:-74px;width:200px;text-align:center;top:86.19px;font-size:11px;color:#222;">Paste</div>
<div class="a dt" style="left:71px;top:52.19px;font-size:11px;color:#8c8c8c;">Cut</div>
<div class="a dt" style="left:71px;top:74.19px;font-size:11px;color:#8c8c8c;">Copy</div>
<div class="a dt" style="left:114px;top:59.98px;font-size:11.6px;color:#1a1a1a;">Century Gothic</div>
<div class="a dt" style="left:235px;top:59.98px;font-size:11.6px;color:#1a1a1a;">10</div>
<div class="a dt" style="left:283px;top:60.63px;font-size:15.5px;font-weight:bold;color:#223a5e;font-family:'Liberation Serif',serif;">A</div>
<div class="a dt" style="left:306px;top:62.19px;font-size:11px;font-weight:bold;color:#223a5e;font-family:'Liberation Serif',serif;">A</div>
<div class="a dt" style="left:117.5px;top:88.08px;font-size:14.2px;font-weight:bold;color:#223a5e;font-family:'Liberation Serif',serif;">B</div>
<div class="a dt" style="left:141px;top:88.15px;font-size:14px;color:#223a5e;font-family:'Liberation Serif',serif;;font-style:italic;font-weight:bold">I</div>
<div class="a dt" style="left:164.8px;top:87.22px;font-size:13.8px;font-weight:bold;color:#223a5e;font-family:'Liberation Serif',serif;">U</div>
<div class="a dt" style="left:185px;top:89.17px;font-size:12.5px;font-weight:bold;color:#223a5e;font-family:'Liberation Serif',serif;;letter-spacing:-0.6px">abc</div>
<div class="a dt" style="left:220px;top:91.92px;font-size:6px;font-weight:bold;color:#1f70c1;">2</div>
<div class="a dt" style="left:243.5px;top:86.92px;font-size:6px;font-weight:bold;color:#1f70c1;">2</div>
<div class="a dt" style="left:258.8px;top:86.78px;font-size:16.5px;font-weight:bold;color:#223a5e;font-family:'Liberation Serif',serif;">A</div>
<div class="a dt" style="left:440px;top:91.84px;font-size:12px;font-weight:bold;color:#1f70c1;">¶</div>
<div class="a dt" style="left:386px;width:200px;text-align:center;top:86.19px;font-size:11px;color:#222;">Picture</div>
<div class="a dt" style="left:430px;width:200px;text-align:center;top:86.19px;font-size:11px;color:#222;">Paint</div>
<div class="a dt" style="left:430px;width:200px;text-align:center;top:99.19px;font-size:11px;color:#222;">drawing</div>
<div class="a dt" style="left:480px;width:200px;text-align:center;top:86.08px;font-size:11.3px;color:#222;">Date and</div>
<div class="a dt" style="left:480px;width:200px;text-align:center;top:99.19px;font-size:11px;color:#222;">time</div>
<div class="a dt" style="left:527px;width:200px;text-align:center;top:86.19px;font-size:11px;color:#222;">Insert</div>
<div class="a dt" style="left:527px;width:200px;text-align:center;top:99.19px;font-size:11px;color:#222;">object</div>
<div class="a dt" style="left:683px;top:52.19px;font-size:11px;color:#222;">Find</div>
<div class="a dt" style="left:663px;top:70.03px;font-size:10px;font-weight:bold;color:#223a5e;">a</div>
<div class="a dt" style="left:668.8px;top:69.52px;font-size:11.5px;font-weight:bold;color:#9a9a9a;font-family:'Liberation Serif',serif;">b</div>
<div class="a dt" style="left:669px;top:77.36px;font-size:10.5px;font-weight:bold;color:#223a5e;">a</div>
<div class="a dt" style="left:674.6px;top:77.36px;font-size:10.5px;font-weight:bold;color:#3a9a3a;">c</div>
<div class="a dt" style="left:683px;top:74.19px;font-size:11px;color:#222;">Replace</div>
<div class="a dt" style="left:683px;top:95.69px;font-size:11px;color:#222;">Select all</div>
<div class="a dt" style="left:10px;top:142.82px;font-size:12.05px;color:#111;">WordPad does not support all of the features of this document’s format. Some content might be missing or displayed improperly.</div>
<div class="a dt" style="left:189px;width:200px;text-align:center;top:170.02px;font-size:11.5px;color:#4b5566;">1</div>
<div class="a dt" style="left:381px;width:200px;text-align:center;top:170.02px;font-size:11.5px;color:#4b5566;">1</div>
<div class="a dt" style="left:477px;width:200px;text-align:center;top:170.02px;font-size:11.5px;color:#4b5566;">2</div>
<div class="a dt" style="left:573px;width:200px;text-align:center;top:170.02px;font-size:11.5px;color:#4b5566;">3</div>
<div class="a dt" style="left:669px;width:200px;text-align:center;top:170.02px;font-size:11.5px;color:#4b5566;">4</div>
<div class="a dt" style="left:765px;width:200px;text-align:center;top:170.02px;font-size:11.5px;color:#4b5566;">5</div>
<div class="a dt" style="left:957px;width:200px;text-align:center;top:170.02px;font-size:11.5px;color:#4b5566;">7</div>
<div class="a dt" style="left:1189px;top:706.19px;font-size:11px;color:#1a1a1a;">100%</div>
<div class="a dt" style="left:88.5px;top:739.05px;font-size:14.3px;color:#3a3a3a;">Type here to search</div>
<div class="a dt" style="left:935px;top:739.67px;font-size:12.5px;color:#f0f0f0;">13°C</div>
<div class="a dt" style="left:973px;top:739.11px;font-size:14.1px;color:#f0f0f0;">Mostly cloudy</div>
<div class="a dt" style="left:1130.5px;width:200px;text-align:center;top:730.12px;font-size:11.2px;color:#f0f0f0;">ENG</div>
<div class="a dt" style="left:1131px;width:200px;text-align:center;top:747.12px;font-size:11.2px;color:#f0f0f0;">CS</div>
<div class="a dt" style="left:1180.5px;width:200px;text-align:center;top:730.02px;font-size:11.5px;color:#f0f0f0;">8:07 PM</div>
<div class="a dt" style="left:1180.5px;width:200px;text-align:center;top:746.88px;font-size:11.9px;color:#f0f0f0;">8/6/2023</div>
<div class="a dt" style="left:1240px;width:200px;text-align:center;top:746.36px;font-size:10.5px;font-weight:bold;color:#fff;">4</div>
</body></html>
